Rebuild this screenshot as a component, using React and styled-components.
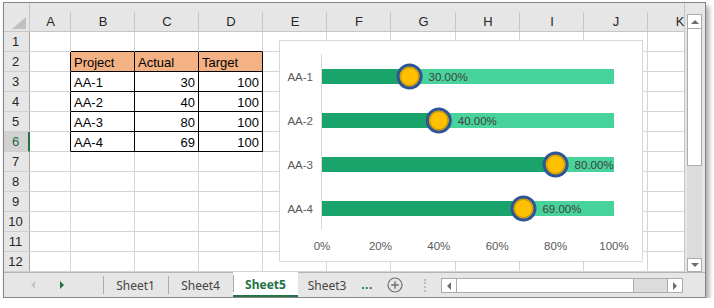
import React from 'react';
import styled, { createGlobalStyle } from 'styled-components';

const GlobalStyle = createGlobalStyle`
  html, body {
    margin: 0;
    padding: 0;
    background: #ffffff;
  }
  body {
    font-family: "Liberation Sans", Arial, sans-serif;
  }
`;

const COLS = ['A', 'B', 'C', 'D', 'E', 'F', 'G', 'H', 'I', 'J', 'K'];
const ROWS = 12;
const SELECTED_ROW = 6;

const table = [
  ['Project', 'Actual', 'Target'],
  ['AA-1', 30, 100],
  ['AA-2', 40, 100],
  ['AA-3', 80, 100],
  ['AA-4', 69, 100],
];

// table sits in B2:D6
const inTable = (r, c) => r >= 2 && r <= 6 && c >= 1 && c <= 3;

const Window = styled.div`
  margin: 2px 0 0 3px;
  width: 703px;
  height: 296px;
  box-sizing: border-box;
  border: 1px solid #858585;
  box-shadow: 3px 4px 5px rgba(0, 0, 0, 0.35);
  display: flex;
  flex-direction: column;
  background: #fff;
  overflow: hidden;
`;

const Main = styled.div`
  display: flex;
  height: 269px;
`;

const Sheet = styled.div`
  position: relative;
  width: 680px;
  height: 269px;
  overflow: hidden;
  display: grid;
  grid-template-columns: 26px 41px 64px 64px 64px 64px 64px 65px 64px 64px 64px 64px;
  grid-template-rows: 29px repeat(12, 20px);
`;

const Corner = styled.div`
  box-sizing: border-box;
  background: #e6e6e6;
  border-right: 1px solid #c6c6c6;
  border-bottom: 1px solid #c6c6c6;
  display: flex;
  justify-content: flex-end;
  align-items: flex-end;
  padding: 0 3px 2px 0;
`;

const CornerMark = styled.div`
  width: 0;
  height: 0;
  border-left: 14px solid transparent;
  border-bottom: 12px solid #c0c0c0;
`;

const ColHead = styled.div`
  position: relative;
  box-sizing: border-box;
  background: #e6e6e6;
  border-bottom: 1px solid #c6c6c6;
  display: flex;
  justify-content: center;
  align-items: flex-start;
  padding-top: 11px;
  font-size: 13px;
  line-height: 15px;
  color: #262626;

  &::after {
    content: '';
    position: absolute;
    right: 0;
    top: 9px;
    bottom: 0;
    width: 1px;
    background: #c6c6c6;
  }
`;

const RowHead = styled.div`
  box-sizing: border-box;
  background: ${(p) => (p.$selected ? '#d2d2d2' : '#e6e6e6')};
  border-bottom: 1px solid #cfcfcf;
  border-right: ${(p) => (p.$selected ? '2px solid #217346' : '1px solid #a6a6a6')};
  display: flex;
  justify-content: center;
  align-items: center;
  padding-right: ${(p) => (p.$selected ? '1px' : '2px')};
  font-size: 13px;
  color: ${(p) => (p.$selected ? '#1e6b45' : '#262626')};
`;

const Cell = styled.div`
  box-sizing: border-box;
  border-right: 1px solid ${(p) => (p.$boxRight ? '#000' : '#d4d4d4')};
  border-bottom: 1px solid ${(p) => (p.$boxBottom ? '#000' : '#d4d4d4')};
  background: ${(p) => (p.$fill ? '#f4b183' : '#fff')};
  display: flex;
  align-items: center;
  justify-content: ${(p) => (p.$num ? 'flex-end' : 'flex-start')};
  padding: 1px 3px 0 3px;
  font-size: 13px;
  color: #000;
  white-space: nowrap;
  overflow: hidden;
`;

const Chart = styled.div`
  position: absolute;
  left: 275px;
  top: 37px;
  width: 364px;
  height: 222px;
  box-sizing: border-box;
  border: 1px solid #d9d9d9;
  background: #fff;
`;

const VScroll = styled.div`
  width: 21px;
  box-sizing: border-box;
  border-left: 1px solid #c6c6c6;
  background: #e6e6e6;
  display: flex;
  flex-direction: column;
  padding: 11px 3px 0 2px;
`;

const ScrollBtn = styled.div`
  box-sizing: border-box;
  width: ${(p) => p.$w || '15px'};
  height: ${(p) => p.$h || '15px'};
  border: 1px solid #ababab;
  background: #fff;
  display: flex;
  align-items: center;
  justify-content: center;
  flex-shrink: 0;
`;

const Arrow = styled.span`
  width: 0;
  height: 0;
  ${(p) =>
    p.$dir === 'up'
      ? `border-left: 4px solid transparent; border-right: 4px solid transparent; border-bottom: 4px solid ${p.$color || '#6d6d6d'};`
      : p.$dir === 'down'
      ? `border-left: 4px solid transparent; border-right: 4px solid transparent; border-top: 4px solid ${p.$color || '#6d6d6d'};`
      : p.$dir === 'left'
      ? `border-top: 4px solid transparent; border-bottom: 4px solid transparent; border-right: 4px solid ${p.$color || '#6d6d6d'};`
      : `border-top: 4px solid transparent; border-bottom: 4px solid transparent; border-left: 4px solid ${p.$color || '#6d6d6d'};`}
`;

const VTrack = styled.div`
  flex: 1;
  display: flex;
  flex-direction: column;
  background: #dcdcdc;
`;

const VThumb = styled.div`
  box-sizing: border-box;
  width: 15px;
  height: 137px;
  border: 1px solid #ababab;
  border-top: none;
  background: #fff;
`;

const TabBar = styled.div`
  height: 25px;
  box-sizing: border-box;
  border-top: 1px solid #b4b4b4;
  background: #e6e6e6;
  display: flex;
  align-items: stretch;
`;

const NavArea = styled.div`
  width: 99px;
  display: flex;
  align-items: center;
  padding-left: 27px;
  gap: 25px;
  box-sizing: border-box;
`;

const Tab = styled.div`
  position: relative;
  width: ${(p) => p.$w || '65px'};
  box-sizing: border-box;
  display: flex;
  align-items: center;
  justify-content: center;
  font-family: "Noto Sans", "Liberation Sans", sans-serif;
  font-size: 12px;
  font-weight: ${(p) => (p.$active ? 700 : 400)};
  color: ${(p) => (p.$active ? '#217346' : '#444')};
  background: ${(p) => (p.$active ? '#fff' : 'transparent')};
  margin-top: ${(p) => (p.$active ? '-1px' : '0')};
  border-bottom: ${(p) => (p.$active ? '2px solid #217346' : 'none')};
  padding-top: ${(p) => (p.$active ? '2px' : '0')};

  &::before {
    content: '';
    display: ${(p) => (p.$sep ? 'block' : 'none')};
    position: absolute;
    left: 0;
    top: 3px;
    bottom: 3px;
    width: 1px;
    background: #ababab;
  }
`;

const More = styled.div`
  width: 22px;
  display: flex;
  align-items: center;
  justify-content: center;
  font-size: 12px;
  font-weight: 700;
  color: #217346;
  letter-spacing: 0.5px;
`;

const AddBtn = styled.div`
  width: 30px;
  display: flex;
  align-items: center;
  justify-content: center;
  padding-left: 4px;
  box-sizing: border-box;
`;

const Splitter = styled.div`
  width: 33px;
  display: flex;
  align-items: center;
  justify-content: center;

  &::before {
    content: '';
    width: 0;
    height: 13px;
    border-left: 2px dotted #bdbdbd;
  }
`;

const HScroll = styled.div`
  width: 242px;
  height: 15px;
  align-self: center;
  margin-top: 1px;
  box-sizing: border-box;
  border: 1px solid #ababab;
  display: flex;
  background: #dcdcdc;
  flex-shrink: 0;
`;

const HBtn = styled.div`
  width: 15px;
  box-sizing: border-box;
  background: #fff;
  display: flex;
  align-items: center;
  justify-content: center;
  ${(p) => (p.$side === 'left' ? 'border-right: 1px solid #ababab;' : 'border-left: 1px solid #ababab;')}
`;

const HThumb = styled.div`
  width: 177px;
  box-sizing: border-box;
  background: #fff;
  border-right: 1px solid #ababab;
`;

const HGap = styled.div`
  flex: 1;
`;

const X0 = 42;
const W = 292;
const BAR_H = 15;

const BulletChart = () => (
  <svg width="362" height="220" style={{ display: 'block' }}>
    <line x1={X0 - 0.5} y1="13" x2={X0 - 0.5} y2="189" stroke="#d9d9d9" strokeWidth="1" />
    {table.slice(1).map(([name, actual, target], i) => {
      const top = 28 + i * 44;
      const cy = top + BAR_H / 2;
      const cx = X0 + (W * actual) / 100;
      return (
        <g key={name}>
          <text x="33" y={cy + 4} textAnchor="end" fontSize="11.5" fill="#595959"
            fontFamily="Liberation Sans, Arial, sans-serif">{name}</text>
          <rect x={X0} y={top} width={(W * target) / 100} height={BAR_H} fill="#48d39c" />
          <rect x={X0} y={top} width={(W * actual) / 100} height={BAR_H} fill="#1ba36c" />
          <circle cx={cx} cy={cy} r="11.5" fill="#ffc000" stroke="#2f5597" strokeWidth="3" />
          <circle cx={cx} cy={cy} r="9" fill="none" stroke="#bf9000" strokeWidth="1" />
          <text x={cx + 19} y={cy + 4} fontSize="11.5" fill="#404040"
            fontFamily="Liberation Sans, Arial, sans-serif">{actual.toFixed(2)}%</text>
        </g>
      );
    })}
    {[0, 20, 40, 60, 80, 100].map((t) => (
      <text key={t} x={X0 + (W * t) / 100} y="209" textAnchor="middle" fontSize="11.5" fill="#595959"
        fontFamily="Liberation Sans, Arial, sans-serif">{t}%</text>
    ))}
  </svg>
);

const PlusIcon = () => (
  <svg width="16" height="16" viewBox="0 0 16 16">
    <circle cx="8" cy="8" r="7" fill="none" stroke="#6f6f6f" strokeWidth="1.2" />
    <path d="M8 4.2v7.6M4.2 8h7.6" stroke="#6f6f6f" strokeWidth="1.4" />
  </svg>
);

const App = () => {
  const cells = [];
  cells.push(
    <Corner key="corner">
      <CornerMark />
    </Corner>
  );
  COLS.forEach((c) => cells.push(<ColHead key={'h' + c}>{c}</ColHead>));

  for (let r = 1; r <= ROWS; r++) {
    cells.push(
      <RowHead key={'r' + r} $selected={r === SELECTED_ROW}>
        {r}
      </RowHead>
    );
    COLS.forEach((col, c) => {
      const boxed = inTable(r, c);
      const value = boxed ? table[r - 2][c - 1] : '';
      cells.push(
        <Cell
          key={col + r}
          $boxRight={boxed || inTable(r, c + 1)}
          $boxBottom={boxed || inTable(r + 1, c)}
          $fill={boxed && r === 2}
          $num={typeof value === 'number'}
        >
          {value}
        </Cell>
      );
    });
  }

  return (
    <>
      <GlobalStyle />
      <Window>
        <Main>
          <Sheet>
            {cells}
            <Chart>
              <BulletChart />
            </Chart>
          </Sheet>
          <VScroll>
            <ScrollBtn>
              <Arrow $dir="up" />
            </ScrollBtn>
            <VTrack>
              <VThumb />
            </VTrack>
            <ScrollBtn $h="14px">
              <Arrow $dir="down" />
            </ScrollBtn>
          </VScroll>
        </Main>
        <TabBar>
          <NavArea>
            <Arrow $dir="left" $color="#c4c4c4" />
            <Arrow $dir="right" $color="#217346" />
          </NavArea>
          <Tab $sep>Sheet1</Tab>
          <Tab $sep>Sheet4</Tab>
          <Tab $sep $active>Sheet5</Tab>
          <Tab $w="58px">Sheet3</Tab>
          <More>...</More>
          <AddBtn>
            <PlusIcon />
          </AddBtn>
          <Splitter />
          <HScroll>
            <HBtn $side="left">
              <Arrow $dir="left" />
            </HBtn>
            <HThumb />
            <HGap />
            <HBtn $side="right">
              <Arrow $dir="right" />
            </HBtn>
          </HScroll>
        </TabBar>
      </Window>
    </>
  );
};

export default App;
